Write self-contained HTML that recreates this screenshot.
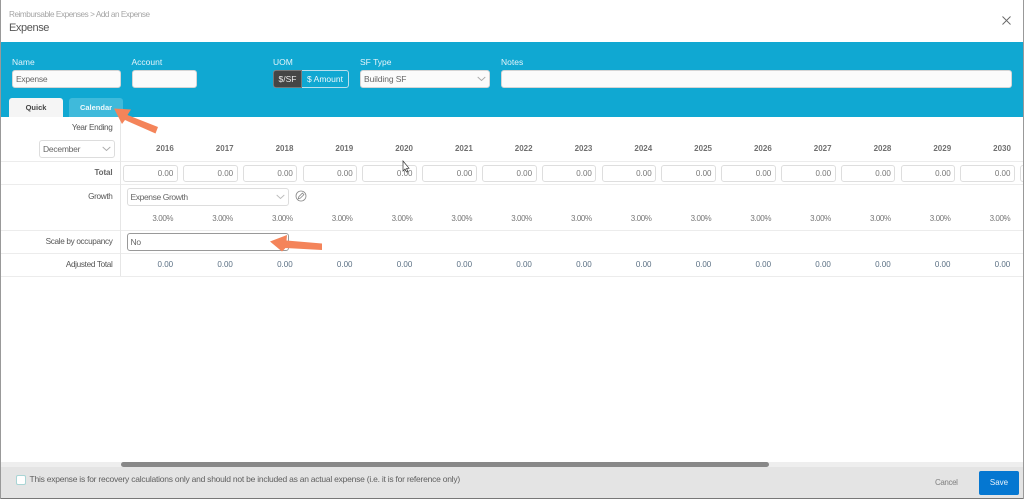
<!DOCTYPE html>
<html>
<head>
<meta charset="utf-8">
<style>
html,body{margin:0;padding:0;background:#fff}
#p{position:relative;width:1024px;height:499px;overflow:hidden;background:#fff;font-family:"Liberation Sans",sans-serif;font-size:8px;color:#555;filter:blur(.3px)}
#p div{position:absolute;box-sizing:border-box;white-space:nowrap}
.lb{color:#e4f4fa;font-size:8.5px;line-height:10px}
.in{background:#fbfbfb;border:1px solid #d5d5d5;border-radius:3px;height:18px;line-height:16.500px;padding-left:3px;color:#666;font-size:8.5px;letter-spacing:-.25px}
.ln{height:1px;background:#ececec;left:1px;width:1022px}
.r{left:0;width:120px;top:0;text-align:right;padding-right:7.5px;color:#555;font-size:8.2px;letter-spacing:-.33px;line-height:10px}
#p .row{left:113.3px;display:flex;width:900px;line-height:10px}
.row span{display:block;flex:0 0 59.8px;width:59.8px;text-align:right;box-sizing:border-box}
#p .boxes{left:123.3px;top:164.5px;display:flex;width:900.7px;height:18px;overflow:hidden}
.boxes span{display:block;flex:0 0 54.5px;height:17.5px;margin-right:5.3px;box-sizing:border-box;border:1px solid #dedede;border-radius:3px;text-align:right;padding-right:3.5px;line-height:15.5px;color:#777;font-size:8px}
</style>
</head>
<body>
<div id="p">
<div style="left:9px;top:10px;font-size:8.2px;letter-spacing:-.45px;line-height:10px;color:#a5a5a5">Reimbursable Expenses &gt; Add an Expense</div>
<div style="left:9px;top:20.500px;font-size:11px;letter-spacing:-.4px;line-height:14px;color:#555">Expense</div>
<svg style="position:absolute;left:1001px;top:15px" width="11" height="11" viewBox="0 0 11 11"><path d="M1.500 1.500L9.500 9.500M9.500 1.500L1.500 9.500" stroke="#666" stroke-width="0.9" fill="none"/></svg>

<div style="left:1px;top:42px;width:1022px;height:75px;background:#10a8d2"></div>

<div class="lb" style="left:12px;top:57px">Name</div>
<div class="in" style="left:12px;top:69.5px;width:109px">Expense</div>
<div class="lb" style="left:131.500px;top:57px">Account</div>
<div class="in" style="left:131.500px;top:69.5px;width:65px"></div>
<div class="lb" style="left:273px;top:57px">UOM</div>
<div style="left:273px;top:69.5px;width:76px;height:18px;border:1px solid #b9dfec;border-radius:3px;color:#eaf7fb;font-size:8.5px;line-height:16px;text-align:center;padding-left:28px">$ Amount</div>
<div style="left:273px;top:69.5px;width:29px;height:18px;background:#454545;border:1px solid #777;border-radius:3px 0 0 3px;color:#eee;font-size:8.5px;line-height:16px;text-align:center">$/SF</div>
<div class="lb" style="left:360px;top:57px">SF Type</div>
<div class="in" style="left:360px;top:69.5px;width:130px;letter-spacing:-.1px">Building SF</div>
<svg style="position:absolute;left:477px;top:76px" width="9" height="6" viewBox="0 0 9 6"><path d="M.7 1L4.500 4.500L8.300 1" stroke="#aaa" stroke-width=".9" fill="none"/></svg>
<div class="lb" style="left:501px;top:57px">Notes</div>
<div class="in" style="left:501px;top:69.5px;width:511px"></div>

<div style="left:9px;top:98px;width:54px;height:19px;background:#f5f5f5;border-radius:3px 3px 0 0;text-align:center;font-weight:bold;font-size:7.5px;line-height:20px;color:#444">Quick</div>
<div style="left:69px;top:98px;width:54px;height:19px;background:#3fbadb;border-radius:3px 3px 0 0;text-align:center;font-weight:bold;font-size:7.5px;line-height:20px;color:#eef9fc">Calendar</div>

<div class="r" style="top:122.500px">Year Ending</div>
<div class="in" style="left:39px;top:140px;width:76px;height:18px;background:#fff;border-color:#ddd">December</div>
<svg style="position:absolute;left:102px;top:146px" width="9" height="6" viewBox="0 0 9 6"><path d="M.7 1L4.500 4.500L8.300 1" stroke="#aaa" stroke-width=".9" fill="none"/></svg>

<div class="row" style="top:144px;left:114px;font-weight:bold;color:#707070;font-size:8px"><span>2016</span><span>2017</span><span>2018</span><span>2019</span><span>2020</span><span>2021</span><span>2022</span><span>2023</span><span>2024</span><span>2025</span><span>2026</span><span>2027</span><span>2028</span><span>2029</span><span>2030</span></div>

<div class="ln" style="top:161px"></div>
<div class="ln" style="top:184px"></div>
<div class="ln" style="top:230px"></div>
<div class="ln" style="top:253px"></div>
<div class="ln" style="top:276px"></div>
<div style="left:120px;top:117px;width:1px;height:159px;background:#e6e6e6"></div>

<div class="r" style="top:167.5px;font-weight:bold;font-size:8px;letter-spacing:-.1px;color:#666">Total</div>
<div class="boxes"><span>0.00</span><span>0.00</span><span>0.00</span><span>0.00</span><span>0.00</span><span>0.00</span><span>0.00</span><span>0.00</span><span>0.00</span><span>0.00</span><span>0.00</span><span>0.00</span><span>0.00</span><span>0.00</span><span>0.00</span><span></span></div>

<div class="r" style="top:191.500px">Growth</div>
<div class="in" style="left:126.500px;top:187.500px;width:162px;background:#fff;border-color:#ddd;letter-spacing:-.4px">Expense Growth</div>
<svg style="position:absolute;left:276px;top:194px" width="9" height="6" viewBox="0 0 9 6"><path d="M.7 1L4.500 4.500L8.300 1" stroke="#bbb" stroke-width=".9" fill="none"/></svg>
<svg style="position:absolute;left:295px;top:190px" width="12" height="12" viewBox="0 0 12 12"><circle cx="6" cy="6" r="5" stroke="#888" stroke-width=".8" fill="none"/><path d="M3.300 8.700L3.800 6.700L7.400 3.100L8.900 4.600L5.300 8.200Z" stroke="#888" stroke-width=".8" fill="none"/></svg>

<div class="row" style="top:213.500px;color:#777;font-size:8px;letter-spacing:-.4px"><span>3.00%</span><span>3.00%</span><span>3.00%</span><span>3.00%</span><span>3.00%</span><span>3.00%</span><span>3.00%</span><span>3.00%</span><span>3.00%</span><span>3.00%</span><span>3.00%</span><span>3.00%</span><span>3.00%</span><span>3.00%</span><span>3.00%</span></div>

<div class="r" style="top:236.500px">Scale by occupancy</div>
<div class="in" style="left:126.500px;top:232.500px;width:162px;background:#fff;border-color:#999">No</div>

<div class="r" style="top:259.500px">Adjusted Total</div>
<div class="row" style="top:259.500px;color:#5a6f83;font-size:8px"><span>0.00</span><span>0.00</span><span>0.00</span><span>0.00</span><span>0.00</span><span>0.00</span><span>0.00</span><span>0.00</span><span>0.00</span><span>0.00</span><span>0.00</span><span>0.00</span><span>0.00</span><span>0.00</span><span>0.00</span></div>

<svg style="position:absolute;left:0;top:0" width="1024" height="499" viewBox="0 0 1024 499">
<polygon points="114,108.500 131,109.500 127.500,115 158,127 155.500,133.500 125,120 122,124" fill="#f4845a"/>
<polygon points="270,241.500 287,235 286.500,240.500 322,243.500 322,250 285.500,248 282,251.500" fill="#f4845a"/>
<path d="M403 161V171L405 169L406.500 172L408 171.300L406.500 168.500L409 168.200Z" fill="#fff" stroke="#333" stroke-width=".7"/>
</svg>

<div style="left:1px;top:462px;width:1022px;height:5px;background:#eeeeee"></div>
<div style="left:121px;top:462px;width:648px;height:5px;background:#888;border-radius:3px"></div>
<div style="left:1px;top:467px;width:1022px;height:31px;background:#e4e4e4"></div>
<div style="left:0;top:498px;width:1024px;height:1px;background:#777"></div>
<div style="left:0;top:0;width:1px;height:499px;background:#999"></div>
<div style="left:1023px;top:0;width:1px;height:499px;background:#999"></div>

<div style="left:16px;top:475px;width:10px;height:10px;background:#fff;border:1px solid #a9d5d5;border-radius:2px"></div>
<div style="left:29.500px;top:474px;font-size:8.5px;letter-spacing:-.24px;line-height:11px;color:#606060">This expense is for recovery calculations only and should not be included as an actual expense (i.e. it is for reference only)</div>
<div style="left:935px;top:477px;font-size:8px;letter-spacing:-.4px;line-height:11px;color:#808080">Cancel</div>
<div style="left:979px;top:470.500px;width:40px;height:24px;background:#0577d1;border-radius:2px;color:#e8f3fb;font-size:8px;line-height:24px;text-align:center">Save</div>
</div>
</body>
</html>
